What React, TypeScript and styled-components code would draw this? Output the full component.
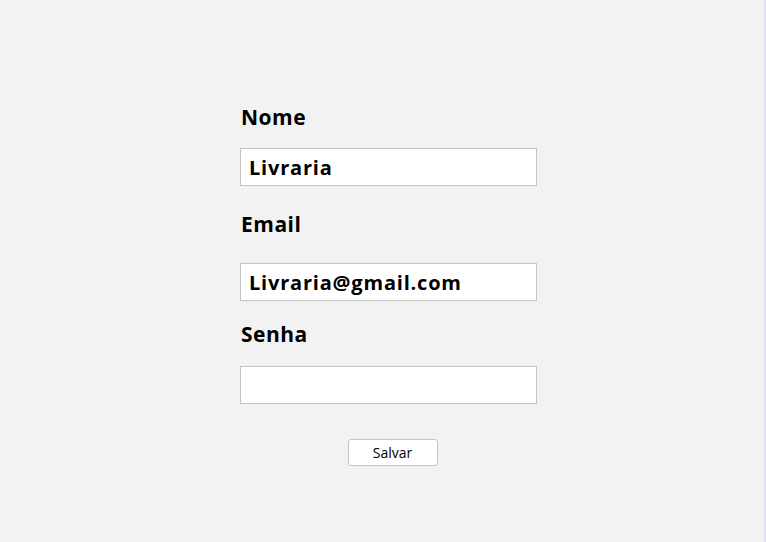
import React from "react";
import styled, { createGlobalStyle } from "styled-components";

const Global = createGlobalStyle`
  html, body { margin: 0; padding: 0; background: #f2f2f2; }
  body { font-family: "Open Sans", "Noto Sans", sans-serif; }
`;

const Page = styled.div`
  width: 766px;
  height: 542px;
  box-sizing: border-box;
  background: #f2f2f2;
  border-right: 2px solid #e1e1f6;
  display: flex;
  justify-content: flex-start;
  padding-left: 240px;
  padding-top: 101px;
`;

const Form = styled.form`
  width: 297px;
  display: flex;
  flex-direction: column;
`;

const Field = styled.div<{ $top: number; $gap: number }>`
  display: flex;
  flex-direction: column;
  margin-top: ${(p) => p.$top}px;
  gap: ${(p) => p.$gap}px;
`;

const Label = styled.label`
  font-family: "Open Sans", "Noto Sans", sans-serif;
  font-weight: 700;
  font-size: 21px;
  line-height: 32px;
  color: #000;
  padding-left: 1px;
  letter-spacing: 0.5px;
`;

const Input = styled.input`
  box-sizing: border-box;
  width: 297px;
  height: 38px;
  border: 1px solid #c4c4c4;
  background: #fff;
  padding: 0 8px;
  font-family: "Open Sans", "Noto Sans", sans-serif;
  font-weight: 700;
  font-size: 20px;
  letter-spacing: 0.8px;
  color: #000;
  outline: none;
`;

const ButtonRow = styled.div`
  display: flex;
  justify-content: center;
  margin-top: 35px;
  padding-left: 8px;
`;

const Button = styled.button`
  width: 90px;
  height: 27px;
  box-sizing: border-box;
  background: #fff;
  border: 1px solid #c6c6c6;
  border-radius: 3px;
  font-family: "Open Sans", "Noto Sans", sans-serif;
  font-size: 14px;
  color: #000;
  padding: 0;
  cursor: pointer;
`;

export default function App() {
  return (
    <>
      <Global />
      <Page>
        <Form onSubmit={(e) => e.preventDefault()}>
          <Field $top={0} $gap={15}>
            <Label>Nome</Label>
            <Input defaultValue="Livraria" />
          </Field>
          <Field $top={22} $gap={23}>
            <Label>Email</Label>
            <Input defaultValue="Livraria@gmail.com" />
          </Field>
          <Field $top={17} $gap={16}>
            <Label>Senha</Label>
            <Input type="password" />
          </Field>
          <ButtonRow>
            <Button type="submit">Salvar</Button>
          </ButtonRow>
        </Form>
      </Page>
    </>
  );
}
